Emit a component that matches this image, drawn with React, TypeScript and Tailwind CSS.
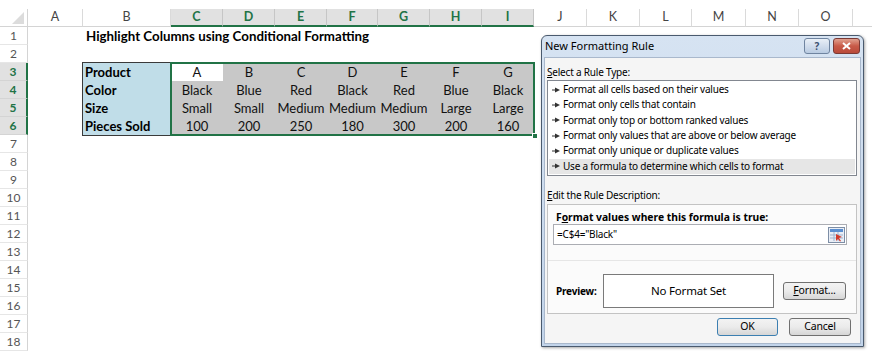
import React from "react";

type Col = { l: string; w: string; sel?: boolean };

const cols: Col[] = [
  { l: "A", w: "w-[55px]" },
  { l: "B", w: "w-[88px]" },
  { l: "C", w: "w-[52px]", sel: true },
  { l: "D", w: "w-[52px]", sel: true },
  { l: "E", w: "w-[52px]", sel: true },
  { l: "F", w: "w-[51px]", sel: true },
  { l: "G", w: "w-[52px]", sel: true },
  { l: "H", w: "w-[52px]", sel: true },
  { l: "I", w: "w-[52px]", sel: true },
  { l: "J", w: "w-[53px]" },
  { l: "K", w: "w-[53px]" },
  { l: "L", w: "w-[52px]" },
  { l: "M", w: "w-[54px]" },
  { l: "N", w: "w-[53px]" },
  { l: "O", w: "w-[54px]" },
  { l: "", w: "w-[30px]" },
];

const data = [
  ["Product", "A", "B", "C", "D", "E", "F", "G"],
  ["Color", "Black", "Blue", "Red", "Black", "Red", "Blue", "Black"],
  ["Size", "Small", "Small", "Medium", "Medium", "Medium", "Large", "Large"],
  ["Pieces Sold", "100", "200", "250", "180", "300", "200", "160"],
];

const xl = { fontFamily: "Lato, 'Liberation Sans', sans-serif" };
const ui = { fontFamily: "'Noto Sans', 'Liberation Sans', sans-serif" };

function RowHeader({ n, sel }: { n: number; sel?: boolean }) {
  return (
    <div
      className={
        sel
          ? "w-[28px] h-[18px] shrink-0 flex items-center justify-center bg-[#e1e1e1] text-[#217346] font-bold text-[12px] border-r-2 border-r-[#217346] border-b border-b-[#d4d4d4]"
          : "w-[28px] h-[18px] shrink-0 flex items-center justify-center bg-white text-[#555] text-[12px] border-r border-r-[#d4d4d4] border-b border-b-[#e6e6e6]"
      }
    >
      {n}
    </div>
  );
}

function Arrow() {
  return (
    <svg width="8" height="6" viewBox="0 0 8 6" className="shrink-0">
      <line x1="0" y1="3" x2="4" y2="3" stroke="#333" strokeWidth="1" />
      <polygon points="3,0.5 8,3 3,5.5" fill="#333" />
    </svg>
  );
}

function RangeIcon() {
  return (
    <svg width="17" height="16" viewBox="0 0 17 16">
      <rect x="0.5" y="0.5" width="16" height="15" fill="#e9eef6" stroke="#7d8ea6" />
      <rect x="2" y="2" width="13" height="3" fill="#5b8fd1" />
      <line x1="2" y1="8" x2="15" y2="8" stroke="#9fb3cf" />
      <line x1="2" y1="11" x2="15" y2="11" stroke="#9fb3cf" />
      <line x1="6" y1="5" x2="6" y2="14" stroke="#9fb3cf" />
      <line x1="10" y1="5" x2="10" y2="14" stroke="#9fb3cf" />
      <polygon points="8,7 14,10 11,11 13,14 12,14.5 10,12 8,14" fill="#d23a2a" />
    </svg>
  );
}

function WinButton({ children, def, w }: { children: React.ReactNode; def?: boolean; w: string }) {
  return (
    <div
      className={
        (def ? "border-[#3c7fb1] " : "border-[#707070] ") +
        w +
        " h-[18px] rounded-[3px] border flex items-center justify-center text-[10.5px] text-black bg-gradient-to-b from-[#f3f3f3] via-[#ebebeb] to-[#d6d6d6]"
      }
    >
      {children}
    </div>
  );
}

export default function App() {
  const rowsAfter = Array.from({ length: 12 }, (_, i) => i + 7);
  return (
    <div className="w-[872px] h-[360px] bg-white relative overflow-hidden" style={xl}>
      <div className="h-[9px]" />
      {/* column headers */}
      <div className="flex h-[18px]">
        <div className="w-[28px] shrink-0 relative border-r border-r-[#d4d4d4] border-b border-b-[#d4d4d4]">
          <svg width="12" height="12" className="absolute right-[3px] bottom-[2px]">
            <polygon points="12,0 12,12 0,12" fill="#dcdcdc" />
          </svg>
        </div>
        {cols.map((c, i) => (
          <div
            key={i}
            className={
              c.w +
              " shrink-0 flex items-center justify-center text-[12.5px] " +
              (c.sel
                ? "bg-[#e1e1e1] text-[#217346] font-bold border-r border-r-[#c6c6c6] border-b-2 border-b-[#217346]"
                : "bg-white text-[#444] border-r border-r-[#dadada] border-b border-b-[#d4d4d4]")
            }
          >
            {c.l}
          </div>
        ))}
      </div>

      {/* row 1 */}
      <div className="flex h-[18px]">
        <RowHeader n={1} />
        <div className="w-[55px] shrink-0" />
        <div className="whitespace-nowrap font-bold text-[13.3px] text-black leading-[18px] pl-[3px]">
          Highlight Columns using Conditional Formatting
        </div>
      </div>
      {/* row 2 */}
      <div className="flex h-[18px]">
        <RowHeader n={2} />
      </div>

      {/* rows 3-6 table */}
      <div className="flex">
        <div className="flex flex-col">
          {[3, 4, 5, 6].map((n) => (
            <RowHeader key={n} n={n} sel />
          ))}
        </div>
        <div className="w-[55px] shrink-0" />
        <div className="w-[88px] shrink-0 flex flex-col bg-[#c0dde8] outline outline-1 outline-[#3a3a3a]">
          {data.map((r, i) => (
            <div key={i} className="h-[18px] leading-[18px] pl-[2px] font-bold text-[13px] text-black">
              {r[0]}
            </div>
          ))}
        </div>
        <div className="relative grid grid-cols-[52px_52px_52px_51px_52px_52px_52px] bg-[#c8c8c8] outline outline-2 -outline-offset-1 outline-[#217346]">
          {data.map((r, ri) =>
            r.slice(1).map((v, ci) => (
              <div
                key={ri + "-" + ci}
                className={
                  "h-[18px] leading-[18px] text-center text-[13px] text-[#111] " +
                  (ri === 0 && ci === 0 ? "bg-white" : "")
                }
              >
                {v}
              </div>
            ))
          )}
          <div className="absolute right-[-4px] bottom-[-4px] w-[6px] h-[6px] bg-[#217346] border border-white" />
        </div>
      </div>

      {rowsAfter.map((n) => (
        <div key={n} className="flex h-[18px]">
          <RowHeader n={n} />
        </div>
      ))}

      {/* dialog */}
      <div
        className="absolute left-[541px] top-[35px] w-[323px] h-[312px] border border-[#4a5a6e] rounded-t-[6px] bg-gradient-to-b from-[#d6e3f2] to-[#c2d4ea] flex flex-col shadow-[1px_1px_3px_rgba(0,0,0,0.35)]"
        style={ui}
      >
        <div className="h-[21px] flex items-center pl-[3px] pr-[3px]">
          <div className="flex-1 text-[11px] text-black">New Formatting Rule</div>
          <div className="flex gap-[3px] self-start mt-[2px]">
            <div className="w-[26px] h-[16px] rounded-[3px] border border-[#6f84a0] bg-gradient-to-b from-[#e9eff7] to-[#b9cbe2] flex items-center justify-center text-[10px] font-bold text-[#3d5070]">
              ?
            </div>
            <div className="w-[27px] h-[16px] rounded-[3px] border border-[#7a3a35] bg-gradient-to-b from-[#e0a08f] via-[#c85a48] to-[#b94a3a] flex items-center justify-center">
              <svg width="9" height="8" viewBox="0 0 9 8">
                <path d="M1 1 L8 7 M8 1 L1 7" stroke="white" strokeWidth="2" />
              </svg>
            </div>
          </div>
        </div>
        <div className="flex-1 mx-[2px] mb-[2px] bg-[#f5f5f5] border border-[#a9b8cc] flex flex-col text-[10px] tracking-[-0.2px] text-black">
          <div className="mt-[7px] h-[14px] leading-[14px] pl-[2px]">
            <u>S</u>elect a Rule Type:
          </div>
          <div className="mt-[1px] ml-[2px] w-[310px] h-[96px] border border-[#828790] bg-white flex flex-col py-[1px]">
            {[
              "Format all cells based on their values",
              "Format only cells that contain",
              "Format only top or bottom ranked values",
              "Format only values that are above or below average",
              "Format only unique or duplicate values",
              "Use a formula to determine which cells to format",
            ].map((t, i) => (
              <div
                key={i}
                className={
                  "h-[15.6px] flex items-center gap-[3px] pl-[3px] mx-[1px] " + (i === 5 ? "bg-[#e6e6e6]" : "")
                }
              >
                <Arrow />
                <span>{t}</span>
              </div>
            ))}
          </div>
          <div className="mt-[12px] h-[14px] leading-[14px] pl-[2px]">
            <u>E</u>dit the Rule Description:
          </div>
          <div className="mt-[2px] ml-[2px] w-[310px] h-[110px] border border-[#c3c3c3] bg-[#fbfbfb] flex flex-col">
            <div className="mt-[5px] h-[14px] leading-[14px] pl-[8px] font-bold text-[10.3px] tracking-normal">
              F<u>o</u>rmat values where this formula is true:
            </div>
            <div className="mt-[0px] ml-[5px] w-[294px] h-[21px] border border-[#abadb3] bg-white flex items-center pl-[3px] pr-[1px]">
              <span className="flex-1">=C$4="Black"</span>
              <RangeIcon />
            </div>
            <div className="mt-[15px] h-px bg-[#e6e6e6]" />
            <div className="mt-[13px] flex items-center h-[34px]">
              <div className="w-[55px] pl-[8px] font-bold">Preview:</div>
              <div className="w-[171px] h-[34px] border border-[#7a7a7a] bg-white flex items-center justify-center text-[11.5px]">
                No Format Set
              </div>
              <div className="ml-[9px]">
                <WinButton w="w-[63px]">
                  <u>F</u>ormat...
                </WinButton>
              </div>
            </div>
          </div>
          <div className="mt-[4px] flex justify-end gap-[11px] pr-[9px]">
            <WinButton def w="w-[61px]">
              OK
            </WinButton>
            <WinButton w="w-[62px]">Cancel</WinButton>
          </div>
        </div>
      </div>
    </div>
  );
}
